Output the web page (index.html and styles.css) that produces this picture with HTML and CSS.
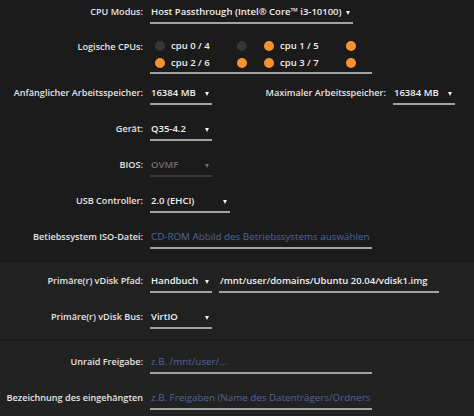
FILE: index.html
```html
<!DOCTYPE html>
<html lang="de">
<head>
<meta charset="utf-8">
<title>VM</title>
<link rel="stylesheet" href="styles.css">
</head>
<body>
<div class="page">
  <section class="sec sec-main">
    <div class="row">
      <div class="label">CPU Modus:</div>
      <div class="field select w-mode"><span>Host Passthrough (Intel® Core™ i3-10100)</span><span class="caret"></span></div>
    </div>
    <div class="row row-cpus">
      <div class="label lbl-cpus">Logische CPUs:</div>
      <div class="field cpus">
        <div class="pair"><span class="dot off"></span><span class="cpu-name">cpu 0 / 4</span><span class="dot off"></span></div>
        <div class="pair"><span class="dot on"></span><span class="cpu-name">cpu 1 / 5</span><span class="dot on"></span></div>
        <div class="pair"><span class="dot on"></span><span class="cpu-name">cpu 2 / 6</span><span class="dot on"></span></div>
        <div class="pair"><span class="dot on"></span><span class="cpu-name">cpu 3 / 7</span><span class="dot on"></span></div>
      </div>
    </div>
    <div class="row row-mem">
      <div class="label">Anfänglicher Arbeitsspeicher:</div>
      <div class="field select w-sm"><span>16384 MB</span><span class="caret"></span></div>
      <div class="label label-2">Maximaler Arbeitsspeicher:</div>
      <div class="field select w-sm"><span>16384 MB</span><span class="caret"></span></div>
    </div>
    <div class="row">
      <div class="label">Gerät:</div>
      <div class="field select w-sm"><span>Q35-4.2</span><span class="caret"></span></div>
    </div>
    <div class="row">
      <div class="label">BIOS:</div>
      <div class="field select w-sm disabled"><span>OVMF</span><span class="caret"></span></div>
    </div>
    <div class="row">
      <div class="label">USB Controller:</div>
      <div class="field select w-usb"><span>2.0 (EHCI)</span><span class="caret"></span></div>
    </div>
    <div class="row">
      <div class="label">Betiebssystem ISO-Datei:</div>
      <div class="field w-wide placeholder">CD-ROM Abbild des Betriebssystems auswählen</div>
    </div>
  </section>
  <section class="sec sec-disk">
    <div class="row">
      <div class="label">Primäre(r) vDisk Pfad:</div>
      <div class="field select w-sm"><span>Handbuch</span><span class="caret"></span></div>
      <div class="field w-path">/mnt/user/domains/Ubuntu 20.04/vdisk1.img</div>
    </div>
    <div class="row">
      <div class="label">Primäre(r) vDisk Bus:</div>
      <div class="field select w-sm"><span>VirtIO</span><span class="caret"></span></div>
    </div>
  </section>
  <section class="sec sec-share">
    <div class="row">
      <div class="label">Unraid Freigabe:</div>
      <div class="field w-wide placeholder">z.B. /mnt/user/...</div>
    </div>
    <div class="row">
      <div class="label">Bezeichnung des eingehängten</div>
      <div class="field w-wide placeholder">z.B. Freigaben (Name des Datenträgers/Ordners inr</div>
    </div>
  </section>
</div>
</body>
</html>
```
FILE: styles.css
```css
html, body {
  margin: 0;
  padding: 0;
}
body {
  background: #1c1b1c;
  color: #e6e6e6;
  font-family: "Open Sans", "Noto Sans", sans-serif;
  font-size: 9.5px;
  font-weight: 600;
  width: 474px;
  height: 416px;
  overflow: hidden;
}
.page {
  display: flex;
  flex-direction: column;
}
.sec-main {
  padding: 5px 0 14px;
}
.sec-disk {
  background: #212121;
  padding: 11px 0 10px;
}
.sec-share {
  background: #222222;
  border-top: 2px solid #1b1b1b;
  padding: 14px 0 10px;
}
.row {
  display: flex;
  align-items: flex-start;
}
.row + .row {
  margin-top: 17px;
}
.row-cpus {
  margin-top: 13px !important;
}
.row-mem {
  margin-top: 12px !important;
}
.label {
  width: 143px;
  flex: none;
  text-align: right;
  white-space: nowrap;
  overflow: hidden;
  font-size: 9.1px;
  line-height: 14px;
  margin-right: 7px;
  color: #e4e4e4;
}
.lbl-cpus {
  padding-top: 3px;
}
.label-2 {
  width: 174px;
}
.field {
  flex: none;
  box-sizing: border-box;
  line-height: 14px;
  padding: 0 2px 3px 1px;
  border-bottom: 2px solid #a2a2a2;
  white-space: nowrap;
  overflow: hidden;
  color: #f0f0f0;
}
.select {
  display: flex;
  justify-content: space-between;
  align-items: center;
}
.caret {
  flex: none;
  width: 0;
  height: 0;
  border-left: 2.5px solid transparent;
  border-right: 2.5px solid transparent;
  border-top: 4px solid #f0f0f0;
  margin-top: 1px;
  margin-right: 1px;
}
.w-sm { width: 62px; }
.w-usb { width: 80px; }
.w-mode { justify-content: flex-start; }
.w-mode .caret { margin-left: 4px; }
.w-wide { width: 222px; }
.w-path { width: 220px; }
.row .field + .field { margin-left: 7px; }
.disabled {
  color: #6e6e6e;
  border-bottom-color: #3a3a3a;
}
.disabled .caret {
  border-top-color: #6e6e6e;
}
.placeholder {
  color: #51639c;
  font-size: 9.8px;
  font-weight: 400;
}
.cpus {
  display: grid;
  grid-template-columns: 92px 92px;
  column-gap: 17px;
  width: 222px;
  padding: 0 16px 1px 5px;
}
.pair {
  display: grid;
  grid-template-columns: 10px 60px 10px;
  column-gap: 6px;
  align-items: center;
  line-height: 17px;
  height: 17px;
}
.cpu-name {
  color: #f0f0f0;
}
.dot {
  width: 10px;
  height: 10px;
  border-radius: 50%;
}
.dot.on { background: #f7922e; }
.dot.off { background: #363636; }
```
